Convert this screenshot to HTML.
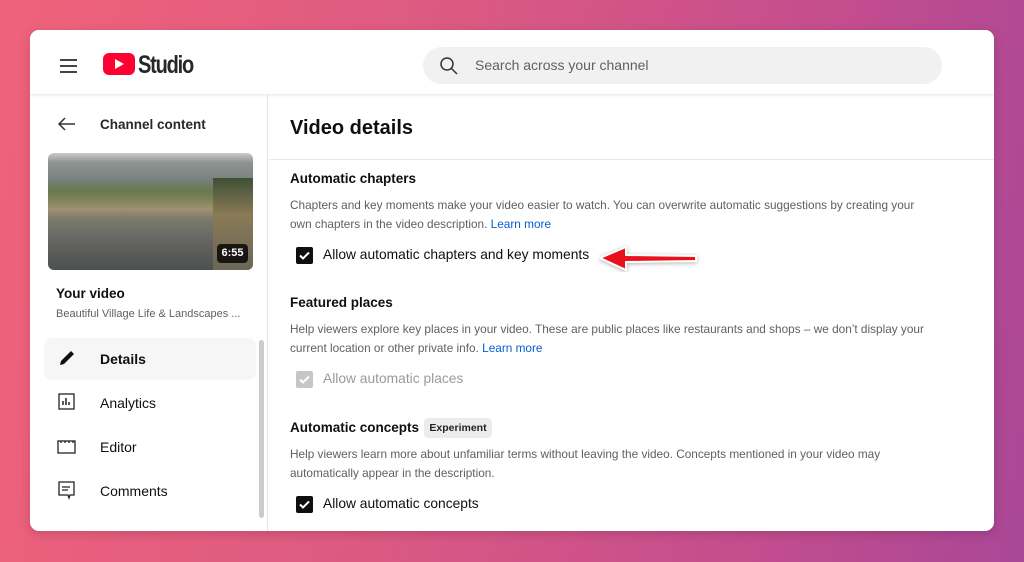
<!DOCTYPE html>
<html><head><meta charset="utf-8"><style>
*{margin:0;padding:0;box-sizing:border-box}
body{width:1024px;height:562px;overflow:hidden;font-family:"Liberation Sans",Roboto,sans-serif;background:linear-gradient(100deg,#f0627a 0%,#dc5a82 40%,#c44d8e 75%,#a94796 100%);position:relative}
.card{position:absolute;left:30px;top:30px;width:964px;height:501px;background:#fff;border-radius:9px;overflow:hidden;box-shadow:0 3px 10px rgba(0,0,0,.15)}
.hdr{position:absolute;left:0;top:0;width:964px;height:65px;border-bottom:1px solid #eee;box-shadow:0 1px 3px rgba(0,0,0,.06);z-index:2;background:#fff}
.abs{position:absolute}
.side{position:absolute;left:0;top:0;width:238px;height:501px;border-right:1px solid #e5e5e5}
.t{position:absolute;white-space:nowrap;color:#0f0f0f}
.g{color:#606060;font-size:11.8px;line-height:19px}
.link{color:#065fd4}
.h{font-size:13.5px;font-weight:bold}
.cb{position:absolute;width:17px;height:17px;background:#0f0f0f;border-radius:2px}
.nav{font-size:14px}
</style></head><body>
<div class="card">
 <div class="hdr">
  <div class="abs" style="left:30px;top:29px;width:17px;height:1.5px;background:#444;box-shadow:0 6px 0 #444,0 12px 0 #444"></div>
  <div class="abs" style="left:73px;top:23px;width:32px;height:22px;background:#ff0033;border-radius:6px"></div>
  <div class="abs" style="left:85px;top:29px;width:0;height:0;border-left:9px solid #fff;border-top:5px solid transparent;border-bottom:5px solid transparent"></div>
  <div class="t" style="left:108px;top:21px;font-size:25px;font-weight:bold;letter-spacing:-1.5px;transform:scaleX(.8);transform-origin:left;color:#282828">Studio</div>
  <div class="abs" style="left:393px;top:17px;width:519px;height:37px;background:#f1f1f1;border-radius:19px"></div>
  <svg class="abs" style="left:409px;top:26px" width="20" height="20" viewBox="0 0 20 20"><circle cx="8" cy="8" r="6" fill="none" stroke="#333" stroke-width="1.5"/><path d="M12.5 12.5L18 18" stroke="#333" stroke-width="1.5"/></svg>
  <div class="t" style="left:445px;top:27px;font-size:14px;color:#606060">Search across your channel</div>
 </div>
 <div class="side">
  <svg class="abs" style="left:27px;top:86px" width="20" height="16" viewBox="0 0 20 16"><path d="M18 8H2M8 2L2 8l6 6" fill="none" stroke="#333" stroke-width="1.5"/></svg>
  <div class="t" style="left:70px;top:87px;font-size:13.5px;font-weight:bold;color:#282828">Channel content</div>
  <div class="abs" style="left:18px;top:123px;width:205px;height:117px;border-radius:6px;overflow:hidden;background:linear-gradient(180deg,#c9ccca 0%,#8f9493 8%,#7a827f 22%,#66784f 32%,#7d8558 40%,#a09070 48%,#7d7b6c 56%,#6b6b66 70%,#5a5c5a 85%,#4e504f 100%)">
   <div class="abs" style="right:0;top:25px;width:40px;height:92px;background:linear-gradient(180deg,#3e5035,#8a7a55 40%,#6a6658)"></div>
   <div class="abs" style="left:169px;top:91px;width:31px;height:19px;background:rgba(0,0,0,.8);border-radius:4px;color:#fff;font-size:11px;font-weight:bold;text-align:center;line-height:19px">6:55</div>
  </div>
  <div class="t" style="left:26px;top:256px;font-size:13.5px;font-weight:bold">Your video</div>
  <div class="t" style="left:26px;top:278px;font-size:11px;color:#606060">Beautiful Village Life &amp; Landscapes ...</div>
  <div class="abs" style="left:14px;top:308px;width:212px;height:42px;background:#f6f6f6;border-radius:8px"></div>
  <svg class="abs" style="left:28px;top:319px" width="18" height="18" viewBox="0 0 18 18"><path d="M2 16l1-4L13 2l3 3L6 15z" fill="#0f0f0f"/></svg>
  <div class="t nav" style="left:70px;top:321px;font-weight:bold">Details</div>
  <svg class="abs" style="left:28px;top:363px" width="18" height="18" viewBox="0 0 18 18"><rect x="1" y="1" width="15" height="15" fill="none" stroke="#222" stroke-width="1.3"/><path d="M5 12V8M8 12V5M11 12V9" stroke="#222" stroke-width="1.5"/></svg>
  <div class="t nav" style="left:70px;top:365px">Analytics</div>
  <svg class="abs" style="left:27px;top:409px" width="20" height="16" viewBox="0 0 20 16"><rect x="1" y="2" width="17" height="12" fill="none" stroke="#222" stroke-width="1.3"/><path d="M4 2v2M8 2v2M12 2v2M16 2v2" stroke="#222" stroke-width="1.3"/></svg>
  <div class="t nav" style="left:70px;top:409px">Editor</div>
  <svg class="abs" style="left:28px;top:451px" width="18" height="20" viewBox="0 0 18 20"><path d="M1 1h15v13h-4l-1 3-1-3H1z" fill="none" stroke="#222" stroke-width="1.3"/><path d="M4 6h8M4 9h6" stroke="#222" stroke-width="1.3"/></svg>
  <div class="t nav" style="left:70px;top:453px">Comments</div>
  <div class="abs" style="left:229px;top:310px;width:5px;height:178px;background:#ccc;border-radius:3px"></div>
 </div>
 <div class="t" style="left:260px;top:87px;font-size:20px;font-weight:bold;color:#0f0f0f">Video details</div>
 <div class="abs" style="left:239px;top:129px;width:725px;height:1px;background:#e8e8e8"></div>
 <div class="t h" style="left:260px;top:141px">Automatic chapters</div>
 <div class="t g" style="left:260px;top:166px">Chapters and key moments make your video easier to watch. You can overwrite automatic suggestions by creating your<br>own chapters in the video description. <span class="link">Learn more</span></div>
 <div class="cb" style="left:266px;top:217px"></div>
 <svg class="abs" style="left:266px;top:217px" width="17" height="17" viewBox="0 0 17 17"><path d="M4 8.5l3 3 6-6" fill="none" stroke="#fff" stroke-width="2"/></svg>
 <div class="t" style="left:293px;top:217px;font-size:13.8px">Allow automatic chapters and key moments</div>
 <svg class="abs" style="left:568px;top:214px" width="104" height="28" viewBox="0 0 104 28"><path d="M2 14L28 3v8l70 1v5l-70 1v8z" fill="#e8101a" stroke="#fff" stroke-width="2" style="filter:drop-shadow(0 1px 2px rgba(0,0,0,.3))"/></svg>
 <div class="t h" style="left:260px;top:265px">Featured places</div>
 <div class="t g" style="left:260px;top:290px">Help viewers explore key places in your video. These are public places like restaurants and shops – we don’t display your<br>current location or other private info. <span class="link">Learn more</span></div>
 <div class="abs" style="left:266px;top:341px;width:17px;height:17px;background:#c6c6c6;border-radius:2px"></div>
 <svg class="abs" style="left:266px;top:341px" width="17" height="17" viewBox="0 0 17 17"><path d="M4 8.5l3 3 6-6" fill="none" stroke="#fff" stroke-width="2"/></svg>
 <div class="t" style="left:293px;top:341px;font-size:13.8px;color:#9a9a9a">Allow automatic places</div>
 <div class="t h" style="left:260px;top:390px">Automatic concepts</div>
 <div class="abs" style="left:394px;top:388px;width:68px;height:20px;background:#ececec;border-radius:4px;font-size:10.5px;font-weight:bold;text-align:center;line-height:20px;color:#222">Experiment</div>
 <div class="t g" style="left:260px;top:415px">Help viewers learn more about unfamiliar terms without leaving the video. Concepts mentioned in your video may<br>automatically appear in the description.</div>
 <div class="cb" style="left:266px;top:466px"></div>
 <svg class="abs" style="left:266px;top:466px" width="17" height="17" viewBox="0 0 17 17"><path d="M4 8.5l3 3 6-6" fill="none" stroke="#fff" stroke-width="2"/></svg>
 <div class="t" style="left:293px;top:466px;font-size:13.8px">Allow automatic concepts</div>
</div>
</body></html>
